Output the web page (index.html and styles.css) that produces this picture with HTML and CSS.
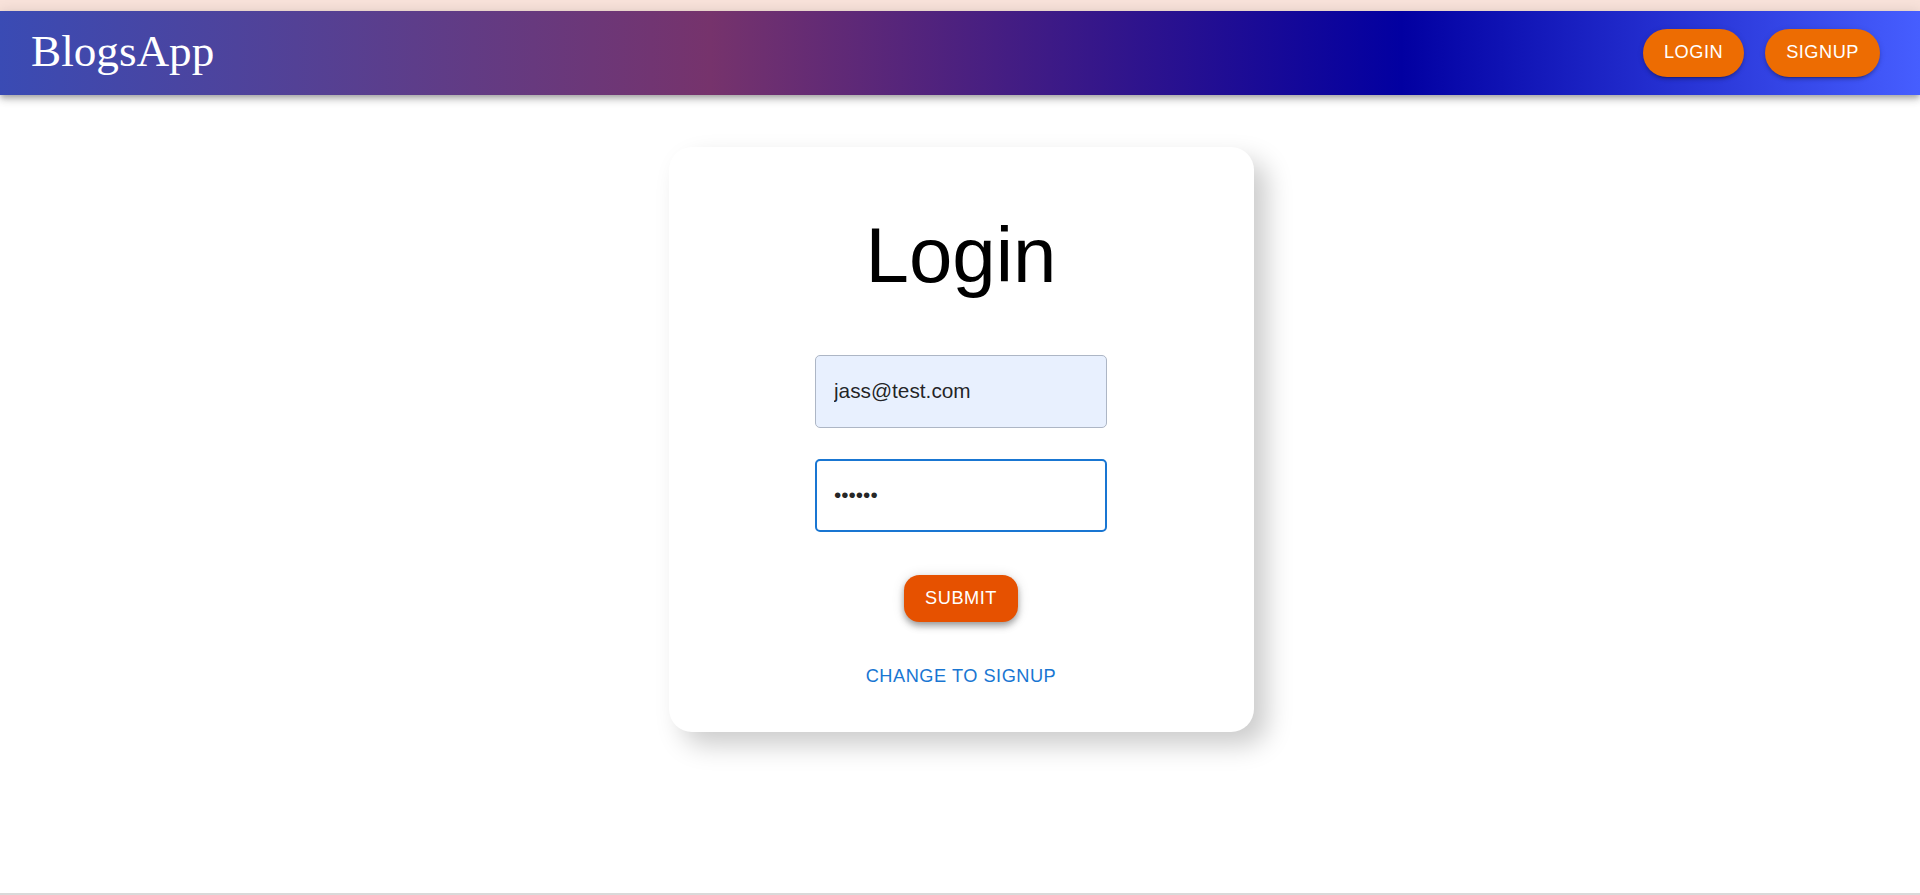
FILE: index.html
```html
<!DOCTYPE html>
<html lang="en">
<head>
<meta charset="utf-8">
<title>BlogsApp</title>
<link rel="stylesheet" href="styles.css">
</head>
<body>
<div class="page">
  <div class="strip"></div>
  <header class="appbar">
    <div class="brand">BlogsApp</div>
    <nav class="nav">
      <button class="pill-btn" type="button">Login</button>
      <button class="pill-btn" type="button">Signup</button>
    </nav>
  </header>
  <main class="main">
    <form class="card">
      <h2 class="card-title">Login</h2>
      <div class="field field-autofill">
        <input class="field-input" type="email" name="email" value="jass@test.com">
      </div>
      <div class="field field-focused">
        <input class="field-input" type="password" name="password" value="123456">
      </div>
      <button class="submit-btn" type="button">Submit</button>
      <button class="text-btn" type="button">Change to Signup</button>
    </form>
  </main>
  <div class="bottom-line"></div>
</div>
</body>
</html>
```

FILE: styles.css
```css
* { box-sizing: border-box; }

html, body {
  margin: 0;
  padding: 0;
  background: #ffffff;
}

body {
  font-family: "Liberation Sans", Arial, sans-serif;
  color: rgba(0, 0, 0, 0.87);
}

.page {
  height: 100vh;
  display: flex;
  flex-direction: column;
  overflow: hidden;
}

.strip {
  height: 11px;
  flex: 0 0 auto;
  background: #f8e2da;
}

.appbar {
  flex: 0 0 84px;
  height: 84px;
  display: flex;
  align-items: center;
  justify-content: space-between;
  padding: 0 40px 0 31px;
  background: linear-gradient(90deg, rgb(58, 75, 180) 0%, rgb(118, 51, 108) 37%, rgb(2, 0, 161) 73%, rgb(70, 94, 255) 100%);
  box-shadow: 0 3px 5px -1px rgba(0, 0, 0, 0.2), 0 5px 7px 0 rgba(0, 0, 0, 0.14), 0 1px 13px 0 rgba(0, 0, 0, 0.12);
  position: relative;
  z-index: 2;
}

.brand {
  font-family: "Liberation Serif", "Times New Roman", serif;
  font-size: 45.2px;
  line-height: 1.235;
  color: #ffffff;
  margin-top: -3px;
}

.nav {
  display: flex;
  gap: 21px;
}

.pill-btn {
  font-family: "Liberation Sans", Arial, sans-serif;
  font-size: 18.2px;
  font-weight: 500;
  line-height: 1.75;
  letter-spacing: 0.02857em;
  text-transform: uppercase;
  color: #ffffff;
  background: #ed6c02;
  border: 0;
  border-radius: 999px;
  padding: 8px 21px;
  height: 48px;
  cursor: pointer;
  box-shadow: 0 4px 1px -3px rgba(0, 0, 0, 0.2), 0 3px 3px 0 rgba(0, 0, 0, 0.14), 0 1px 6px 0 rgba(0, 0, 0, 0.12);
}

.main {
  flex: 1 1 auto;
  display: flex;
  justify-content: center;
  align-items: flex-start;
  padding-top: 52px;
}

.card {
  width: 585px;
  display: flex;
  flex-direction: column;
  align-items: center;
  padding: 31px 31px 32px;
  background: #ffffff;
  border-radius: 23px;
  box-shadow: 13px 13px 26px #cccccc;
  margin: 0 0 0 2px;
}

.card-title {
  margin: 31px 0 31px;
  font-family: "Liberation Sans", Arial, sans-serif;
  font-size: 78px;
  font-weight: 400;
  line-height: 1.2;
  color: #000000;
}

.field {
  width: 292px;
  height: 73px;
  border-radius: 5px;
  margin: 21px 0 10px;
  display: flex;
  align-items: center;
}

.field-autofill {
  background: #e8f0fe;
  border: 1px solid #adb6c5;
}

.field-focused {
  background: #ffffff;
  border: 2px solid #1976d2;
}

.field-input {
  width: 100%;
  height: 100%;
  border: 0;
  outline: none;
  background: transparent;
  font-family: "Liberation Sans", Arial, sans-serif;
  font-size: 20.8px;
  color: rgba(0, 0, 0, 0.87);
  padding: 0 17px 0 18px;
}

.field-focused .field-input {
  padding: 0 16px 0 17px;
  letter-spacing: 0;
}

.submit-btn {
  margin-top: 33px;
  height: 47px;
  padding: 8px 21px;
  font-family: "Liberation Sans", Arial, sans-serif;
  font-size: 18.2px;
  font-weight: 500;
  line-height: 1.75;
  letter-spacing: 0.02857em;
  text-transform: uppercase;
  color: #ffffff;
  background: #e65100;
  border: 0;
  border-radius: 15.6px;
  cursor: pointer;
  box-shadow: 0 3px 6px -1px rgba(0, 0, 0, 0.25), 0 5px 7px 0 rgba(0, 0, 0, 0.16), 0 1px 13px 0 rgba(0, 0, 0, 0.12);
}

.text-btn {
  margin-top: 31px;
  height: 47px;
  padding: 8px 10px;
  font-family: "Liberation Sans", Arial, sans-serif;
  font-size: 18.2px;
  font-weight: 500;
  line-height: 1.75;
  letter-spacing: 0.02857em;
  text-transform: uppercase;
  color: #1976d2;
  background: transparent;
  border: 0;
  border-radius: 5px;
  cursor: pointer;
}

.bottom-line {
  flex: 0 0 2px;
  height: 2px;
  background: #d9d9d9;
}
```
